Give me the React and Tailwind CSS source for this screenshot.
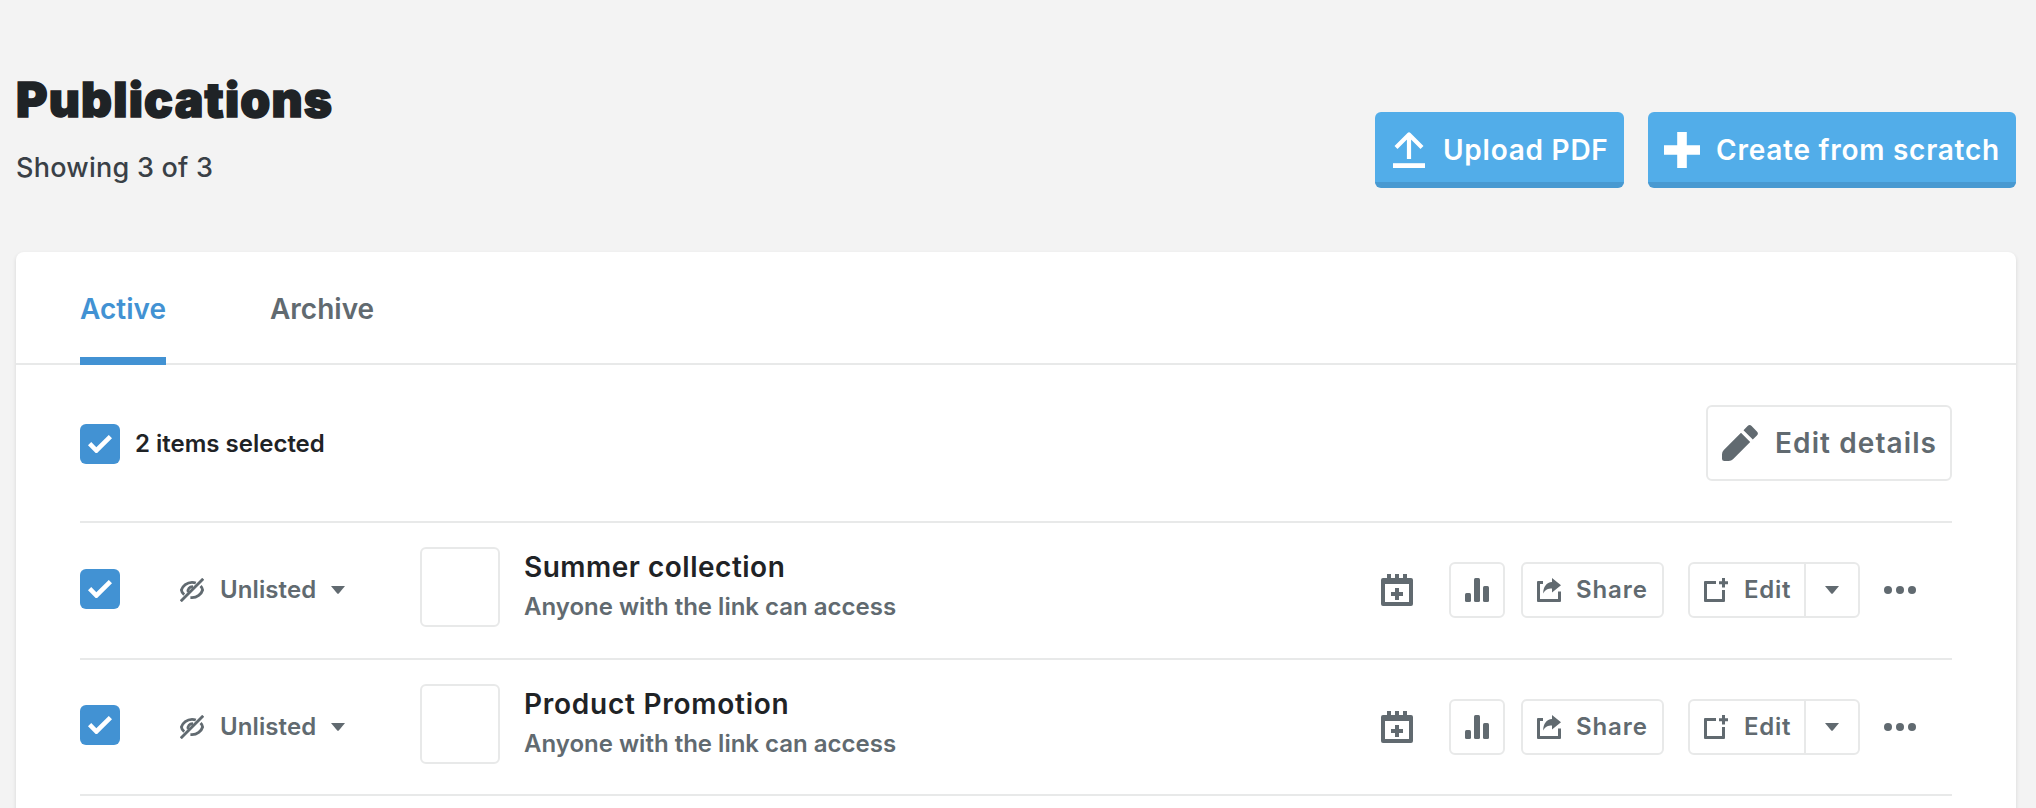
const iconGray = "fill-[#616a70]"

const UploadIcon = () => (
  <svg width="32" height="36" viewBox="0 0 32 36" fill="none" className="shrink-0">
    <path d="M3 15.5 16 2.5l13 13M16 3.5V27" stroke="#fff" strokeWidth="4.2" strokeLinejoin="round" />
    <path d="M0 31.2h32V36H0z" fill="#fff" />
  </svg>
)

const PlusIcon = () => (
  <svg width="36" height="36" viewBox="0 0 36 36" className="shrink-0 fill-white">
    <path d="M13.2 0h9.6v13.2H36v9.6H22.8V36h-9.6V22.8H0v-9.6h13.2z" />
  </svg>
)

const PencilIcon = () => (
  <svg width="36" height="36" viewBox="0 0 36 36" className={`shrink-0 ${iconGray}`}>
    <path d="M19 7.8 28.2 17 11 34.2Q9.2 36 6.8 36H2.5Q0 36 0 33.5v-4.3Q0 26.8 1.8 25zM21.5 5.2 25.6 1.1q2-2 4 0l5.3 5.3q2 2 0 4L30.8 14.4z" />
  </svg>
)

const CheckIcon = () => (
  <svg width="24" height="18" viewBox="0 0 24 18" fill="none">
    <path d="M1.6 8.6 8.4 15.5 22.4 1.6" stroke="#fff" strokeWidth="4.6" />
  </svg>
)

const HiddenIcon = () => (
  <svg width="24" height="24" viewBox="0 0 24 24" fill="none" stroke="#616a70" strokeWidth="2.8" className="shrink-0">
    <path d="M.8 23.2 23.2.8" />
    <path d="M4.2 16.6C2.7 15.4 1.6 13.6 1.4 12 2.6 7.8 7 4.3 12 4.3c1.4 0 2.6.2 3.8.7" />
    <path d="M8.2 14.2C7.2 11 9.8 8.4 13 8.8" />
    <path d="M20.6 8c1.1 1.2 1.8 2.6 2 4C21.4 16.2 17 19.7 12 19.7h-1.6" />
  </svg>
)

const CaretIcon = () => (
  <svg width="14" height="8" viewBox="0 0 14 8" className={`shrink-0 ${iconGray}`}>
    <path d="M0 0h14L8 7.3q-1 1.1-2 0z" />
  </svg>
)

const CalendarIcon = () => (
  <svg width="32" height="32" viewBox="0 0 32 32" className={`shrink-0 ${iconGray}`}>
    <path
      fillRule="evenodd"
      d="M6 0h4v4h4V0h4v4h4V0h4v4h4q2 0 2 2v24q0 2-2 2H2q-2 0-2-2V6q0-2 2-2h4zM4 10v18h24V10z"
    />
    <path d="M14 14h4v4h4v4h-4v4h-4v-4h-4v-4h4z" />
  </svg>
)

const StatsIcon = () => (
  <svg width="24" height="24" viewBox="0 0 24 24" className={iconGray}>
    <rect x="0" y="15" width="6" height="9" rx="1.5" />
    <rect x="9" y="0" width="6" height="24" rx="1.5" />
    <rect x="18" y="8" width="6" height="16" rx="1.5" />
  </svg>
)

const ShareIcon = () => (
  <svg width="24" height="24" viewBox="0 0 24 24" className={`shrink-0 ${iconGray}`}>
    <path d="M1 3h5v3H3v15h18v-7.5h3V23q0 1-1 1H1q-1 0-1-1V4q0-1 1-1z" />
    <path d="M15 0 24 7.2 15 14.4v-4c-4 0-6.8 1.2-8.8 5C6.2 9 9.5 4.4 15 4z" />
  </svg>
)

const ComposeIcon = () => (
  <svg width="24" height="24" viewBox="0 0 24 24" className={`shrink-0 ${iconGray}`}>
    <path d="M1 3h11v3H3v15h15v-9h3v11q0 1-1 1H1q-1 0-1-1V4q0-1 1-1z" />
    <path d="M18 0h3v3.2h3v3h-3v3.2h-3V6.2h-3v-3h3z" />
  </svg>
)

const DotsIcon = () => (
  <svg width="32" height="8" viewBox="0 0 32 8" className={iconGray}>
    <circle cx="4" cy="4" r="4" />
    <circle cx="16" cy="4" r="4" />
    <circle cx="28" cy="4" r="4" />
  </svg>
)

const Checkbox = () => (
  <button className="flex size-10 shrink-0 items-center justify-center rounded-md bg-[#4292d3]">
    <CheckIcon />
  </button>
)

const publications = [
  {
    id: 1,
    title: "Summer collection",
    access: "Anyone with the link can access",
    rowClass: "h-[137px]",
    checkboxClass: "mt-[46px]",
    titleClass: "tracking-[0.5px]",
  },
  {
    id: 2,
    title: "Product Promotion",
    access: "Anyone with the link can access",
    rowClass: "h-[136px]",
    checkboxClass: "mt-[45px]",
    titleClass: "tracking-[0.75px]",
  },
]

const PublicationRow = ({ publication }) => (
  <div className={`flex items-start border-t-2 border-[#e8e9e9] text-[#616a70] ${publication.rowClass}`}>
    <div className={publication.checkboxClass}>
      <Checkbox />
    </div>
    <button className="mt-[51px] ml-[60px] flex h-8 w-[240px] items-center">
      <HiddenIcon />
      <span className="ml-4 w-24 text-left text-[24px] font-semibold tracking-[0.1px] whitespace-nowrap">Unlisted</span>
      <span className="ml-[15px]">
        <CaretIcon />
      </span>
    </button>
    <div className="mt-6 size-20 shrink-0 rounded-md border-2 border-[#e8e9e9]" />
    <div className="mt-[25px] ml-6 flex-1 whitespace-nowrap">
      <h2 className={`text-[28px] leading-[39px] font-semibold text-[#1f2326] ${publication.titleClass}`}>
        {publication.title}
      </h2>
      <p className="text-[24px] leading-[39px] font-semibold">{publication.access}</p>
    </div>
    <div className="mt-[39px] mr-9 flex h-14 items-center text-[24px] font-semibold">
      <CalendarIcon />
      <button className="ml-9 flex h-14 w-14 items-center justify-center rounded-md border-2 border-[#e8e9e9]">
        <StatsIcon />
      </button>
      <button className="ml-4 flex h-14 w-[143px] items-center rounded-md border-2 border-[#e8e9e9] pl-[14px]">
        <ShareIcon />
        <span className="ml-[15px] tracking-[0.9px]">Share</span>
      </button>
      <div className="ml-6 flex h-14 w-[172px] rounded-md border-2 border-[#e8e9e9]">
        <button className="flex w-[116px] items-center border-r-2 border-[#e8e9e9] pl-[14px]">
          <ComposeIcon />
          <span className="ml-4 tracking-[0.7px]">Edit</span>
        </button>
        <button className="flex flex-1 items-center justify-center">
          <CaretIcon />
        </button>
      </div>
      <button className="ml-6">
        <DotsIcon />
      </button>
    </div>
  </div>
)

const App = () => (
  <div className="flex h-[808px] flex-col overflow-hidden bg-[#f3f3f3] pr-5 pl-4 font-['Inter',sans-serif]">
    <header className="flex h-[252px] shrink-0 justify-between whitespace-nowrap">
      <div className="pt-[70px]">
        <h1 className="text-[48px] leading-[60px] font-black tracking-[1.2px] text-[#1f2326] [-webkit-text-stroke:1.5px_#1f2326]">
          Publications
        </h1>
        <p className="mt-[18px] text-[27px] leading-[40px] font-medium tracking-[0.25px] text-[#394046]">Showing 3 of 3</p>
      </div>
      <div className="flex gap-6 pt-28 text-[28px] font-semibold tracking-[0.75px] text-white">
        <button className="flex h-[76px] w-[249px] items-center rounded-md border-b-[6px] border-[#4899d1] bg-[#52ade9] pt-[6px] pl-[18px]">
          <UploadIcon />
          <span className="ml-[18px]">Upload PDF</span>
        </button>
        <button className="flex h-[76px] w-[368px] items-center rounded-md border-b-[6px] border-[#4899d1] bg-[#52ade9] pt-[6px] pl-4">
          <PlusIcon />
          <span className="ml-4">Create from scratch</span>
        </button>
      </div>
    </header>

    <main className="flex h-[620px] shrink-0 flex-col rounded-t-lg bg-white shadow-[0_2px_4px_rgba(0,0,0,0.12)]">
      <nav className="flex h-[113px] shrink-0 items-end gap-[104px] border-b-2 border-[#e8e9e9] pl-16 text-[28px] font-semibold text-[#616a70]">
        <button className="-mb-[2px] h-[113px] w-[86px] border-b-8 border-[#4292d3] pt-2 text-[#4292d3]">Active</button>
        <button className="-mb-[2px] h-[113px] w-[103px] border-b-8 border-transparent pt-2">Archive</button>
      </nav>
      <section className="px-16">
        <div className="flex h-[156px] items-center justify-between whitespace-nowrap">
          <div className="mt-[2px] flex items-center">
            <Checkbox />
            <span className="ml-[15px] text-[24px] font-semibold text-[#1f2326]">2 items selected</span>
          </div>
          <button className="flex h-[76px] w-[246px] items-center rounded-md border-2 border-[#e8e9e9] pl-[14px] text-[28px] font-semibold tracking-[1.1px] text-[#616a70]">
            <PencilIcon />
            <span className="ml-[17px]">Edit details</span>
          </button>
        </div>
        {publications.map((publication) => (
          <PublicationRow key={publication.id} publication={publication} />
        ))}
        <div className="border-t-2 border-[#e8e9e9]" />
      </section>
    </main>
  </div>
)

export default App
